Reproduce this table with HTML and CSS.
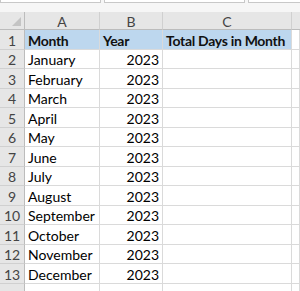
FILE: index.html
```html
<!DOCTYPE html>
<html>
<head>
<meta charset="utf-8">
<link rel="stylesheet" href="styles.css">
</head>
<body>
<div class="app">
  <div class="topbar">
    <div class="box box-name"></div>
    <div class="box box-mid"></div>
    <div class="box box-formula"></div>
  </div>
  <div class="grid">
    <div class="corner"><span class="tri"></span></div>
    <div class="ch">A</div>
    <div class="ch">B</div>
    <div class="ch">C</div>
    <div class="ch last"></div>

    <div class="rh r-odd">1</div>
    <div class="c hd">Month</div>
    <div class="c hd">Year</div>
    <div class="c hd">Total Days in Month</div>
    <div class="c"></div>

    <div class="rh">2</div><div class="c">January</div><div class="c num">2023</div><div class="c"></div><div class="c"></div>
    <div class="rh">3</div><div class="c">February</div><div class="c num">2023</div><div class="c"></div><div class="c"></div>
    <div class="rh">4</div><div class="c">March</div><div class="c num">2023</div><div class="c"></div><div class="c"></div>
    <div class="rh">5</div><div class="c">April</div><div class="c num">2023</div><div class="c"></div><div class="c"></div>
    <div class="rh">6</div><div class="c">May</div><div class="c num">2023</div><div class="c"></div><div class="c"></div>
    <div class="rh">7</div><div class="c">June</div><div class="c num">2023</div><div class="c"></div><div class="c"></div>
    <div class="rh">8</div><div class="c">July</div><div class="c num">2023</div><div class="c"></div><div class="c"></div>
    <div class="rh">9</div><div class="c">August</div><div class="c num">2023</div><div class="c"></div><div class="c"></div>
    <div class="rh">10</div><div class="c">September</div><div class="c num">2023</div><div class="c"></div><div class="c"></div>
    <div class="rh">11</div><div class="c">October</div><div class="c num">2023</div><div class="c"></div><div class="c"></div>
    <div class="rh">12</div><div class="c">November</div><div class="c num">2023</div><div class="c"></div><div class="c"></div>
    <div class="rh">13</div><div class="c">December</div><div class="c num">2023</div><div class="c"></div><div class="c"></div>
    <div class="rh"></div><div class="c"></div><div class="c"></div><div class="c"></div><div class="c"></div>
  </div>
</div>
</body>
</html>
```
FILE: styles.css
```css
html, body {
  margin: 0;
  padding: 0;
  background: #ffffff;
}
.app {
  width: 300px;
  height: 291px;
  overflow: hidden;
  font-family: Lato, "Liberation Sans", sans-serif;
  font-size: 14px;
  color: #000;
}
.topbar {
  height: 12px;
  background: #f6f6f6;
  display: flex;
  gap: 3px;
  align-items: flex-start;
}
.box {
  height: 2px;
  background: #fff;
  border: 1px solid #c8c8c8;
  border-top: none;
  box-sizing: content-box;
}
.box-name { width: 99px; }
.box-mid { width: 139px; }
.box-formula { flex: 1; border-right: none; }
.grid {
  display: grid;
  grid-template-columns: 25px 75px 63px 129px 1fr;
  grid-template-rows: 18px repeat(6, 20px 19px) 20px 20px;
}
.corner {
  background: #e6e6e6;
  border-right: 1px solid #bcbcbc;
  border-bottom: 1px solid #bcbcbc;
  position: relative;
}
.tri {
  position: absolute;
  right: 3px;
  bottom: 3px;
  width: 0;
  height: 0;
  border-left: 9px solid transparent;
  border-bottom: 9px solid #c4c4c4;
}
.ch {
  background: #e6e6e6;
  border-right: 1px solid #d0d0d0;
  border-bottom: 1px solid #bcbcbc;
  color: #444;
  display: flex;
  align-items: center;
  justify-content: center;
  padding-top: 1px;
}
.ch.last { border-right: none; }
.rh {
  background: #e6e6e6;
  border-right: 1px solid #bcbcbc;
  border-bottom: 1px solid #d0d0d0;
  color: #444;
  display: flex;
  align-items: center;
  justify-content: center;
  padding-top: 1px;
}
.c {
  border-right: 1px solid #dadada;
  border-bottom: 1px solid #dadada;
  padding: 0 3px;
  display: flex;
  align-items: center;
  white-space: nowrap;
  overflow: hidden;
  padding-top: 1px;
}
.hd {
  background: #bdd7ee;
  font-weight: bold;
  color: #111;
  letter-spacing: -0.3px;
}
.num { justify-content: flex-end; }
```
